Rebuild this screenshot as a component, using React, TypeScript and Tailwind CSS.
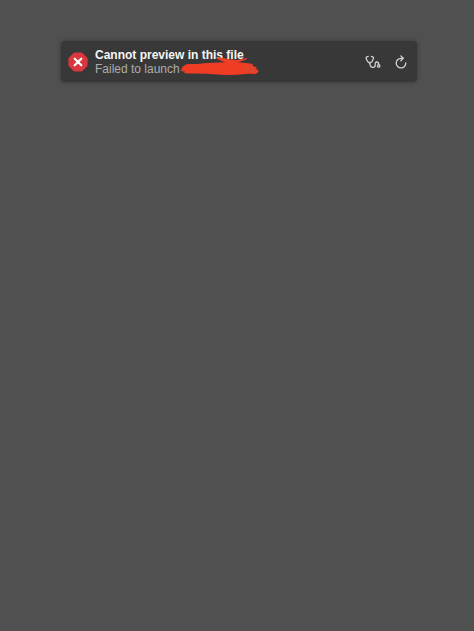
interface IconButtonProps {
  label: string
  children: React.ReactNode
}

const IconButton = ({ label, children }: IconButtonProps) => (
  <button type="button" aria-label={label} className="flex h-4 w-4 items-center justify-center text-[#d2d2d2]">
    {children}
  </button>
)

const ErrorIcon = () => (
  <svg viewBox="0 0 20 20" className="h-5 w-5 shrink-0" aria-hidden="true">
    <path
      d="M7 0.4h6a2 2 0 0 1 1.4.6l4.6 4.6a2 2 0 0 1 .6 1.4v6a2 2 0 0 1-.6 1.4l-4.6 4.6a2 2 0 0 1-1.4.6H7a2 2 0 0 1-1.4-.6l-4.6-4.6A2 2 0 0 1 .4 13V7a2 2 0 0 1 .6-1.4l4.6-4.6A2 2 0 0 1 7 .4Z"
      fill="#d9363e"
    />
    <path d="M6.7 6.7l6.6 6.6M13.3 6.7l-6.6 6.6" stroke="#fff" strokeWidth="2.2" strokeLinecap="round" />
  </svg>
)

const StethoscopeIcon = () => (
  <svg viewBox="0 0 16 14" className="h-[14px] w-4 shrink-0" fill="none" stroke="currentColor" strokeWidth="1.3" strokeLinecap="round" strokeLinejoin="round" aria-hidden="true">
    <path d="M3.2 1.4L1.8 1.8C1.1 2 1 2.6 1.1 3.3c.5 2 1.9 4 3.7 4.9 1.8-.9 3.2-2.9 3.7-4.9.1-.7 0-1.3-.7-1.5L6.4 1.4" />
    <path d="M4.8 8.2c.1 2.5 1.3 4.1 3.1 4.1 1.8 0 2.5-1.2 2.3-2.7-.2-1.5.3-2.6 1.6-2.6 1.3 0 1.8 1 1.9 2.4" />
    <circle cx="13.7" cy="10.9" r="1.2" />
  </svg>
)

const RefreshIcon = () => (
  <svg viewBox="0 0 14 14" className="h-[14px] w-[14px] shrink-0" fill="none" stroke="currentColor" strokeWidth="1.3" strokeLinecap="round" strokeLinejoin="round" aria-hidden="true">
    <path d="M9 3.3H7A4.8 4.8 0 1 0 11.8 8" />
    <path d="M6.8 0.9L9.2 3.3L6.8 5.7" />
  </svg>
)

// Marker strokes hiding the name of the app
const Redaction = () => (
  <svg viewBox="0 0 79 20" className="absolute top-[-6px] left-full h-5 w-[79px]" aria-hidden="true">
    <path
      d="M1 15.3C1.5 12 3 9.5 6 8.6C10 7.3 17 8.8 23 7.3L45 6.3L37 3C36 1.5 38 .9 40 1.5L51 3.5L56 4.2L66 2.2C68 2.2 67 3.3 65 4L58 6.2L70 7.4C73 7.6 74 8.5 72 9.5L75 10.7C77 11 77 12.5 76 13.3C79 13.8 79 16.2 77 17C75 19 70 17.5 66 17.9C55 19.2 45 19.4 34 18.3C24 17.4 12 18.4 4 17L5 15.5Z"
      fill="#ee3d24"
    />
    <path d="M67 11.5l1 1M66 15l1.5.4M71 10.5l1.5.3M73 13l-1 2.5" stroke="#9b6b60" strokeWidth=".9" strokeLinecap="round" />
  </svg>
)

export default function App() {
  return (
    <main className="min-h-screen bg-[#505050] pt-[41px] pr-[57px] pl-[61px] font-['Liberation_Sans',sans-serif]">
      <section
        role="alert"
        className="flex items-center rounded bg-[#383838] pt-[7px] pr-2 pb-[6px] pl-[7px] shadow-[0_0_4px_rgba(0,0,0,0.35)]"
      >
        <ErrorIcon />
        <div className="ml-[7px] min-w-0 flex-1 text-xs leading-[14px]">
          <h1 className="font-bold text-[#f5f5f5]">Cannot preview in this file</h1>
          <p className="relative w-fit text-[#adadad]">
            Failed to launch
            <Redaction />
          </p>
        </div>
        <div className="flex items-center gap-3">
          <IconButton label="Diagnostics">
            <StethoscopeIcon />
          </IconButton>
          <IconButton label="Try again">
            <RefreshIcon />
          </IconButton>
        </div>
      </section>
    </main>
  )
}
